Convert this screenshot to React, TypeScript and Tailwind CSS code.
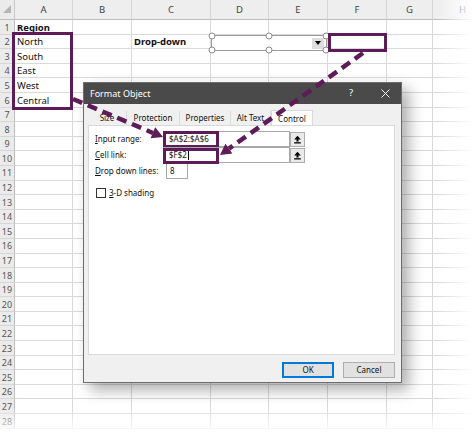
import React from 'react';

const COLS = ['A', 'B', 'C', 'D', 'E', 'F', 'G', 'H'];
const ROWS = Array.from({ length: 28 }, (_, i) => i + 1);

const CELLS: Record<string, { text: string; bold?: boolean }> = {
  A1: { text: 'Region', bold: true },
  A2: { text: 'North' },
  A3: { text: 'South' },
  A4: { text: 'East' },
  A5: { text: 'West' },
  A6: { text: 'Central' },
  C2: { text: 'Drop-down', bold: true },
};

function Sheet() {
  return (
    <div className="grid grid-cols-[15px_58px_59px_79px_58px_59px_59px_46px_60px] grid-rows-[20px_repeat(28,14.6px)]">
      {/* select-all corner */}
      <div className="relative border-b border-r border-b-[#bdbdbd] border-r-[#c8c8c8] bg-[#ebebeb]">
        <div className="absolute bottom-[6px] right-[3px] h-0 w-0 border-b-[8px] border-l-[8px] border-b-[#b5b5b5] border-l-transparent" />
      </div>
      {COLS.map((c) => (
        <div
          key={c}
          className="flex items-center justify-center border-b border-r border-b-[#bdbdbd] border-r-[#d6d6d6] bg-[#eeeeee] pt-[2px] text-[9.5px] text-[#444]"
        >
          {c}
        </div>
      ))}
      {ROWS.map((r) => (
        <React.Fragment key={r}>
          <div className="flex items-center justify-center border-b border-r border-b-[#d6d6d6] border-r-[#bdbdbd] bg-[#ebebeb] pt-[1px] text-[9px] text-[#555]">
            {r}
          </div>
          {COLS.map((c) => {
            const cell = CELLS[`${c}${r}`];
            return (
              <div
                key={c}
                className="flex items-center whitespace-nowrap border-b border-r border-[#d9d9d9] pl-[2px] pt-[2px] text-[9.5px] text-[#111]"
              >
                {cell && <span className={cell.bold ? 'font-bold' : ''}>{cell.text}</span>}
              </div>
            );
          })}
        </React.Fragment>
      ))}
    </div>
  );
}

function Handle({ className }: { className: string }) {
  return (
    <div
      className={`absolute h-[7px] w-[7px] -translate-x-1/2 -translate-y-1/2 rounded-full border border-[#8c8c8c] bg-white ${className}`}
    />
  );
}

// form control sitting on D2:E2, shown selected
function DropDownControl() {
  return (
    <div className="absolute left-[211px] top-[35px] flex h-[16px] w-[116px] items-center justify-end border border-[#9a9a9a] bg-white pr-[2px]">
      <div className="flex h-[11px] w-[12px] items-center justify-center bg-[#dedede]">
        <div className="h-0 w-0 border-x-[3px] border-t-[4px] border-x-transparent border-t-black" />
      </div>
      <Handle className="left-0 top-0" />
      <Handle className="left-1/2 top-0" />
      <Handle className="left-full top-0" />
      <Handle className="left-0 top-full" />
      <Handle className="left-1/2 top-full" />
      <Handle className="left-full top-full" />
    </div>
  );
}

function RefButton() {
  return (
    <div className="flex h-[15px] w-[15px] items-center justify-center border border-[#adadad] bg-[#eaeaea]">
      <svg width="9" height="9" viewBox="0 0 9 9">
        <polygon points="4.5,0.8 1.2,4.4 7.8,4.4" fill="#000" />
        <rect x="3.5" y="4.2" width="2" height="2.4" fill="#000" />
        <rect x="1.2" y="7.2" width="6.6" height="1.3" fill="#000" />
      </svg>
    </div>
  );
}

function Tab({ label, width, active }: { label: string; width: string; active?: boolean }) {
  if (active) {
    return (
      <div
        className={`-mb-px flex h-[16px] items-center justify-center border-x border-t border-[#d9d9d9] bg-white ${width}`}
      >
        {label}
      </div>
    );
  }
  return (
    <div className={`flex h-[14px] items-center justify-center border-r border-[#dcdcdc] ${width}`}>{label}</div>
  );
}

function FormatObjectDialog() {
  return (
    <div className="absolute left-[83px] top-[82px] flex h-[301px] w-[319px] flex-col border border-[#6d6d6d] bg-[#f0f0f0] text-[8px] text-[#111] shadow-[7px_7px_14px_rgba(0,0,0,0.32)]">
      <div className="flex h-[21px] shrink-0 items-center bg-[#4a4a4a] pl-[6px] text-white">
        <span className="text-[9px]">Format Object</span>
        <span className="ml-auto mr-[28px] text-[9.5px]">?</span>
        <svg width="9" height="9" viewBox="0 0 9 9" className="mr-[11px]">
          <path d="M0.5 0.5 L8.5 8.5 M8.5 0.5 L0.5 8.5" stroke="#fff" strokeWidth="1" />
        </svg>
      </div>

      <div className="flex flex-1 flex-col pb-[4px] pl-[4px] pr-[6px]">
        <div className="flex h-[21px] shrink-0 items-end">
          <Tab label="Size" width="w-[39px]" />
          <Tab label="Protection" width="w-[53px]" />
          <Tab label="Properties" width="w-[51px]" />
          <Tab label="Alt Text" width="w-[40px]" />
          <Tab label="Control" width="w-[42px]" active />
        </div>

        <div className="flex flex-1 flex-col border border-[#d9d9d9] bg-white pl-[6px] pt-[5px]">
          <div className="flex h-[16px] items-center">
            <span className="w-[68px]">
              <span className="underline">I</span>nput range:
            </span>
            <div className="relative flex h-[16px] w-[127px] items-center border border-[#a8a8a8] pl-[5px] text-[8px]">
              $A$2:$A$6
              <div className="absolute -left-px -top-px h-[17px] w-[56px] border-[3px] border-[#5d1b58]" />
            </div>
            <RefButton />
          </div>
          <div className="flex h-[16px] items-center">
            <span className="w-[68px]">
              <span className="underline">C</span>ell link:
            </span>
            <div className="relative flex h-[16px] w-[127px] items-center border border-[#a8a8a8] pl-[5px] text-[8px]">
              $F$2
              <span className="ml-px h-[9px] w-px bg-black" />
              <div className="absolute -left-px top-0 h-[16px] w-[56px] border-[3px] border-[#5d1b58]" />
            </div>
            <RefButton />
          </div>
          <div className="flex h-[16px] items-center">
            <span className="w-[71px]">
              <span className="underline">D</span>rop down lines:
            </span>
            <div className="flex h-[16px] w-[22px] items-center border border-[#a8a8a8] pl-[3px]">8</div>
          </div>
          <div className="mt-[8px] flex items-center gap-[3px] pl-px">
            <div className="h-[10px] w-[10px] border border-[#333] bg-white" />
            <span>
              <span className="underline">3</span>-D shading
            </span>
          </div>
        </div>

        <div className="mt-[7px] flex h-[16px] shrink-0 justify-end gap-[9px]">
          <div className="flex w-[52px] items-center justify-center border border-[#0078d7] bg-[#e1e1e1] shadow-[inset_0_0_0_1px_#0078d7]">
            OK
          </div>
          <div className="flex w-[52px] items-center justify-center border border-[#adadad] bg-[#e1e1e1]">Cancel</div>
        </div>
      </div>
    </div>
  );
}

// dashed callout arrows linking the ranges to the dialog fields
function Callouts() {
  return (
    <svg className="pointer-events-none absolute inset-0" width="474" height="435" viewBox="0 0 474 435">
      <g stroke="#5d1b58" strokeWidth="4.5" strokeDasharray="10 6" fill="none">
        <line x1="73" y1="99" x2="153" y2="133" />
        <line x1="363" y1="53" x2="229" y2="148.6" />
      </g>
      <polygon points="163,137 150.6,138.2 155.2,127.2" fill="#5d1b58" />
      <polygon points="220,155 225.4,143.7 232.4,153.5" fill="#5d1b58" />
    </svg>
  );
}

export default function App() {
  return (
    <div className="relative h-[435px] w-[474px] overflow-hidden bg-white font-['Noto_Sans',sans-serif]">
      <Sheet />
      <DropDownControl />
      <div className="absolute left-[12px] top-[32px] h-[78px] w-[61px] border-[3px] border-[#5d1b58]" />
      <div className="absolute left-[328px] top-[33px] h-[19px] w-[59px] border-[3px] border-[#5d1b58]" />
      <FormatObjectDialog />
      <Callouts />
      <div className="pointer-events-none absolute right-0 top-0 h-full w-[38px] bg-linear-to-r from-white/0 to-white" />
      <div className="pointer-events-none absolute bottom-0 left-0 h-[28px] w-full bg-linear-to-b from-white/0 to-white" />
    </div>
  );
}
